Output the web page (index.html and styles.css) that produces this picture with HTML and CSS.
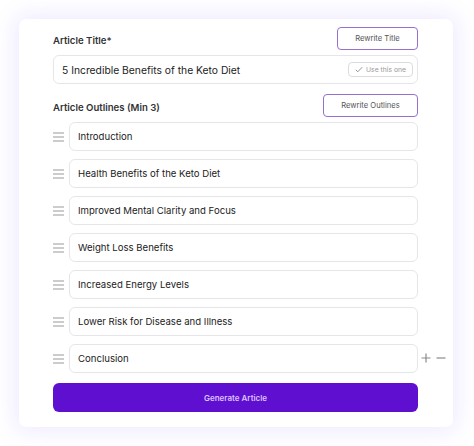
FILE: index.html
```html
<!DOCTYPE html>
<html>
<head>
<meta charset="utf-8">
<link rel="stylesheet" href="styles.css">
</head>
<body>
<div class="card">
  <div class="head head-title">
    <span class="label">Article Title*</span>
    <button class="ghost w-title">Rewrite Title</button>
  </div>
  <div class="field title-field">
    <span class="field-text big">5 Incredible Benefits of the Keto Diet</span>
    <span class="badge"><svg width="8" height="7" viewBox="0 0 8 7"><path d="M0.8 3.8 L2.8 5.8 L7.2 1.2" fill="none" stroke="#8a8a8a" stroke-width="0.9"/></svg>Use this one</span>
  </div>
  <div class="head head-outlines">
    <span class="label">Article Outlines (Min 3)</span>
    <button class="ghost w-outlines">Rewrite Outlines</button>
  </div>
  <div class="rows">
    <div class="row"><svg class="handle" width="11" height="10" viewBox="0 0 11 10"><path d="M0 1h11M0 5h11M0 9h11" stroke="#9a9a9a" stroke-width="1.1"/></svg><div class="field"><span class="field-text">Introduction</span></div></div>
    <div class="row"><svg class="handle" width="11" height="10" viewBox="0 0 11 10"><path d="M0 1h11M0 5h11M0 9h11" stroke="#9a9a9a" stroke-width="1.1"/></svg><div class="field"><span class="field-text">Health Benefits of the Keto Diet</span></div></div>
    <div class="row"><svg class="handle" width="11" height="10" viewBox="0 0 11 10"><path d="M0 1h11M0 5h11M0 9h11" stroke="#9a9a9a" stroke-width="1.1"/></svg><div class="field"><span class="field-text">Improved Mental Clarity and Focus</span></div></div>
    <div class="row"><svg class="handle" width="11" height="10" viewBox="0 0 11 10"><path d="M0 1h11M0 5h11M0 9h11" stroke="#9a9a9a" stroke-width="1.1"/></svg><div class="field"><span class="field-text">Weight Loss Benefits</span></div></div>
    <div class="row"><svg class="handle" width="11" height="10" viewBox="0 0 11 10"><path d="M0 1h11M0 5h11M0 9h11" stroke="#9a9a9a" stroke-width="1.1"/></svg><div class="field"><span class="field-text">Increased Energy Levels</span></div></div>
    <div class="row"><svg class="handle" width="11" height="10" viewBox="0 0 11 10"><path d="M0 1h11M0 5h11M0 9h11" stroke="#9a9a9a" stroke-width="1.1"/></svg><div class="field"><span class="field-text">Lower Risk for Disease and Illness</span></div></div>
    <div class="row"><svg class="handle" width="11" height="10" viewBox="0 0 11 10"><path d="M0 1h11M0 5h11M0 9h11" stroke="#9a9a9a" stroke-width="1.1"/></svg><div class="field"><span class="field-text">Conclusion</span></div>
      <div class="pm"><svg width="10" height="10" viewBox="0 0 10 10"><path d="M0.5 5h9M5 0.5v9" stroke="#8a8a8a" stroke-width="1.2"/></svg><svg width="10" height="10" viewBox="0 0 10 10"><path d="M0.5 5h9" stroke="#8a8a8a" stroke-width="1.2"/></svg></div>
    </div>
  </div>
  <button class="generate">Generate Article</button>
</div>
</body>
</html>
```
FILE: styles.css
```css
* { box-sizing: border-box; }
html, body { margin: 0; padding: 0; background: #ffffff; }
body {
  width: 474px;
  height: 446px;
  padding: 19px 0 0 19px;
  font-family: "Inter", "Noto Sans", sans-serif;
  color: #222;
}
.card {
  width: 434px;
  height: 408px;
  background: #fff;
  border-radius: 7px;
  box-shadow: 0 0 22px 5px rgba(150, 110, 255, 0.14);
  padding: 8px 35px 15px 34px;
  display: flex;
  flex-direction: column;
}
.head {
  display: flex;
  justify-content: space-between;
  align-items: center;
  height: 23px;
}
.label {
  font-size: 9.6px;
  font-weight: 600;
  color: #333;
  line-height: 12px;
  margin-top: 5px;
}
.ghost {
  height: 23px;
  border: 1px solid #9670cf;
  border-radius: 4px;
  background: #fff;
  font-family: inherit;
  font-size: 7.6px;
  color: #555;
  padding: 0;
}
.w-title { width: 81px; }
.w-outlines { width: 95px; }
.field {
  height: 29px;
  border: 1px solid #e6e6ea;
  border-radius: 6px;
  display: flex;
  align-items: center;
  justify-content: space-between;
  padding: 0 4px 0 8px;
  flex: 1;
  background: #fff;
}
.field-text {
  font-size: 9.6px;
  color: #222;
}
.field-text.big { font-size: 10.3px; }
.title-field {
  flex: none;
  margin-top: 5px;
  margin-bottom: 10px;
}
.badge {
  height: 15px;
  width: 65px;
  border: 1px solid #dcdce0;
  border-radius: 4px;
  font-size: 6.8px;
  color: #999;
  display: flex;
  align-items: center;
  justify-content: center;
  gap: 3px;
}
.rows {
  display: flex;
  flex-direction: column;
  gap: 8px;
  margin-top: 5px;
}
.row {
  display: flex;
  align-items: center;
  gap: 5px;
  position: relative;
}
.handle { flex: none; }
.pm {
  position: absolute;
  left: 368px;
  top: 9px;
  display: flex;
  gap: 5px;
}
.generate {
  margin-top: 10px;
  height: 29px;
  width: 100%;
  border: none;
  border-radius: 6px;
  background: #5e0fd0;
  color: #dcc2ff;
  font-family: inherit;
  font-size: 8px;
  font-weight: 600;
}
```
